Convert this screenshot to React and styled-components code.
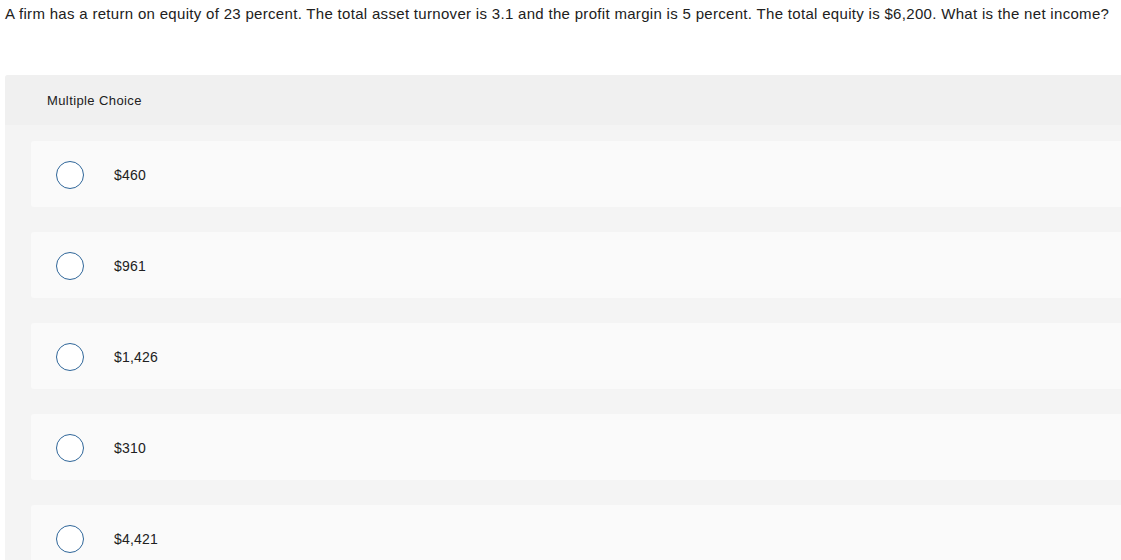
import React from "react";
import styled, { createGlobalStyle } from "styled-components";

const options = ["$460", "$961", "$1,426", "$310", "$4,421"];

const GlobalStyle = createGlobalStyle`
  body {
    margin: 0;
    background: #fff;
    font-family: "Liberation Sans", Arial, sans-serif;
    color: #212121;
  }
`;

const Page = styled.div`
  padding: 4px 0 0 5px;
`;

const Question = styled.p`
  margin: 0;
  font-size: 15px;
  line-height: 20px;
  letter-spacing: 0.31px;
  white-space: nowrap;
`;

const Panel = styled.div`
  margin-top: 51px;
  background: #f4f4f4;
  border-radius: 3px 0 0 0;
`;

const PanelHeader = styled.div`
  height: 50px;
  display: flex;
  align-items: center;
  padding-left: 42px;
  background: #f0f0f0;
  border-radius: 3px 0 0 0;
  font-size: 13px;
  letter-spacing: 0.4px;
`;

const OptionList = styled.div`
  display: flex;
  flex-direction: column;
  gap: 25px;
  padding: 16px 0 20px 26px;
`;

const Option = styled.label`
  height: 66px;
  display: flex;
  align-items: center;
  background: #fafafa;
  border-radius: 3px 0 0 3px;
  padding-left: 25px;
  font-size: 14px;
  letter-spacing: 0.2px;
  line-height: 18px;
  padding-top: 1px;
  box-sizing: border-box;
  cursor: pointer;
`;

const Radio = styled.span`
  width: 26px;
  height: 26px;
  border: 1.3px solid #2f6699;
  border-radius: 50%;
  background: #fff;
  margin-right: 30px;
`;

export default function App() {
  return (
    <Page>
      <GlobalStyle />
      <Question>
        A firm has a return on equity of 23 percent. The total asset turnover
        is 3.1 and the profit margin is 5 percent. The total equity is $6,200.
        What is the net income?
      </Question>
      <Panel>
        <PanelHeader>Multiple Choice</PanelHeader>
        <OptionList>
          {options.map((opt) => (
            <Option key={opt}>
              <Radio />
              {opt}
            </Option>
          ))}
        </OptionList>
      </Panel>
    </Page>
  );
}
